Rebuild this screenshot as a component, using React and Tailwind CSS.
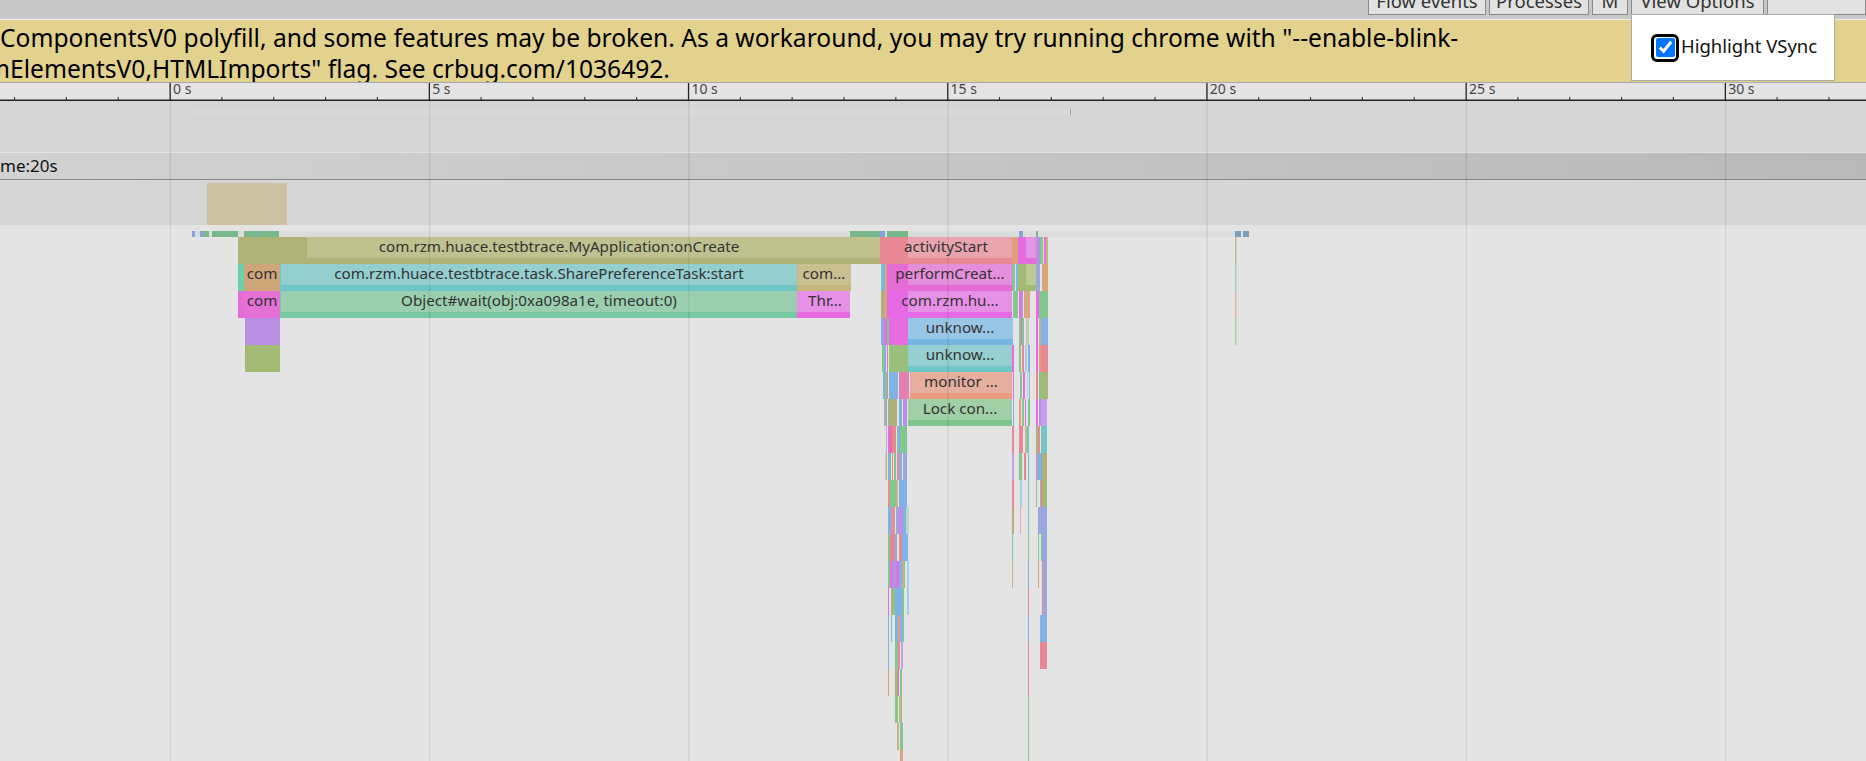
const G = "#82c88e", B = "#80b2e5", P = "#e98895", M = "#e56de0", U = "#b88fe2", O = "#aeb27a", T = "#c9b27e", S = "#e0a07f", C = "#70c7c7", A = "#a2ba74", V = "#9aa8e0", LB = "#a9cdef", LP = "#e9a9b2", D = "#c5a0ea";

const FONT = "font-['Noto_Sans',sans-serif]";
const X0 = 170, STEP = 259.2;
const majors = [0, 1, 2, 3, 4, 5, 6, 7].map((k) => X0 + k * STEP);
const minors = [];
for (let k = -1; k < 8; k++) for (let j = 1; j < 5; j++) minors.push(X0 + (k + j / 5) * STEP);
const RULER = [[0, "0 s"], [1, "5 s"], [2, "10 s"], [3, "15 s"], [4, "20 s"], [5, "25 s"], [6, "30 s"]];

const named = [
  { r: 1, a: 238, b: 880, base: "#b1b376", la: 307, lb: 880, light: "#bfc28f", t: "com.rzm.huace.testbtrace.MyApplication:onCreate", c: 559 },
  { r: 1, a: 880, b: 1012, base: "#e98895", la: 908, lb: 1012, light: "#e9a4ae", t: "activityStart", c: 946 },
  { r: 2, a: 244, b: 280, base: "#cfa57a", la: 244, lb: 280, light: "#cfa57a", t: "com", c: 262 },
  { r: 2, a: 280, b: 797, base: "#6fc5c7", la: 281, lb: 797, light: "#94cfd0", t: "com.rzm.huace.testbtrace.task.SharePreferenceTask:start", c: 539 },
  { r: 2, a: 797, b: 851, base: "#c5b67b", la: 798, lb: 851, light: "#c9bf90", t: "com...", c: 824 },
  { r: 2, a: 887, b: 1012, base: "#e56cd4", la: 908, lb: 1012, light: "#e58fdc", t: "performCreat...", c: 950 },
  { r: 3, a: 244, b: 280, base: "#e571d6", la: 244, lb: 280, light: "#e571d6", t: "com", c: 262 },
  { r: 3, a: 280, b: 797, base: "#76c9a0", la: 281, lb: 797, light: "#9ad0b0", t: "Object#wait(obj:0xa098a1e, timeout:0)", c: 539 },
  { r: 3, a: 797, b: 850, base: "#e66ae6", la: 797, lb: 850, light: "#e691e6", t: "Thr...", c: 825 },
  { r: 3, a: 887, b: 1012, base: "#e66ae6", la: 908, lb: 1012, light: "#e691e6", t: "com.rzm.hu...", c: 950 },
  { r: 4, a: 908, b: 1013, base: "#76b6e6", la: 908, lb: 1013, light: "#98c6e6", t: "unknow...", c: 960 },
  { r: 5, a: 908, b: 1012, base: "#70c7c7", la: 908, lb: 1012, light: "#96cfcf", t: "unknow...", c: 960 },
  { r: 6, a: 910, b: 1012, base: "#e79b7f", la: 910, lb: 1012, light: "#e5ae9f", t: "monitor ...", c: 961 },
  { r: 7, a: 908, b: 1012, base: "#7fc68e", la: 908, lb: 1012, light: "#a2d0a6", t: "Lock con...", c: 960 },
];

// [row, x1, x2, colour]
const s = [
  [1, 1012, 1018, S], [1, 1018, 1036, M], [1, 1026, 1036, "#e595e5", 21], [1, 1036, 1040, U], [1, 1040, 1043, G], [1, 1044, 1046, M], [1, 1046, 1048, T],
  [2, 238, 244, "#6fcfa9"], [2, 881, 883, C], [2, 883, 885, B], [2, 885, 887, S], [2, 1012, 1015, G], [2, 1016, 1018, B], [2, 1018, 1036, A], [2, 1026, 1036, "#b9cc96", 21], [2, 1036, 1040, V], [2, 1042, 1048, "#d6a57a"],
  [3, 238, 244, "#e56cd4"], [3, 881, 884, O], [3, 884, 887, S], [3, 1013, 1018, G], [3, 1019, 1021, M], [3, 1021, 1023, U], [3, 1024, 1030, "#d8a881"], [3, 1036, 1039, M], [3, 1039, 1048, G],
  [4, 245, 280, U], [4, 881, 883, B], [4, 883, 885, U], [4, 885, 887, M], [4, 887, 889, G], [4, 889, 908, M], [4, 1019, 1021, G], [4, 1021, 1022, M], [4, 1022, 1024, G], [4, 1026, 1029, "#c8c4c0"], [4, 1036, 1038, M], [4, 1039, 1041, T], [4, 1041, 1048, B],
  [5, 245, 280, A], [5, 882, 884, G], [5, 884, 886, B], [5, 887, 888, M], [5, 889, 908, "#98c07c"], [5, 1012, 1014, M], [5, 1019, 1021, G], [5, 1022, 1024, P], [5, 1025, 1027, LB], [5, 1028, 1030, B], [5, 1036, 1038, M], [5, 1039, 1041, S], [5, 1041, 1048, P],
  [6, 883, 885, B], [6, 885, 887, G], [6, 887, 888, P], [6, 889, 898, B], [6, 899, 909, "#e47fb2"], [6, 1013, 1014, M], [6, 1020, 1022, G], [6, 1023, 1025, M], [6, 1027, 1028, LB], [6, 1029, 1030, C], [6, 1036, 1038, P], [6, 1039, 1041, G], [6, 1041, 1048, A],
  [7, 884, 885, S], [7, 885, 887, B], [7, 888, 897, O], [7, 899, 902, B], [7, 903, 907, U], [7, 1013, 1014, B], [7, 1019, 1021, S], [7, 1022, 1024, G], [7, 1025, 1026, M], [7, 1028, 1030, G], [7, 1036, 1038, M], [7, 1039, 1041, U], [7, 1041, 1047, D],
  [8, 886, 887, D], [8, 888, 890, M], [8, 890, 892, "#e56fa0"], [8, 892, 896, P], [8, 897, 898, G], [8, 898, 900, B], [8, 900, 907, G], [8, 1012, 1014, P], [8, 1019, 1023, P], [8, 1025, 1027, "#c0b5a5"], [8, 1027, 1028, G], [8, 1028, 1029, C], [8, 1036, 1038, O], [8, 1038, 1040, P], [8, 1041, 1047, C],
  [9, 885.5, 887, T], [9, 888, 890, B], [9, 890, 891, G], [9, 892, 893, P], [9, 894, 896, G], [9, 897, 899, P], [9, 899, 902, V], [9, 903, 907, V], [9, 1012, 1014, D], [9, 1019, 1022, G], [9, 1024, 1026, P], [9, 1028, 1029, C], [9, 1036, 1037, P], [9, 1037, 1042, B], [9, 1042, 1047, O],
  [10, 888, 890, P], [10, 890, 896, G], [10, 896, 898, T], [10, 899, 903, B], [10, 903, 907, B], [10, 1012, 1014, P], [10, 1020, 1022, LB], [10, 1028, 1029, C], [10, 1036, 1037, G], [10, 1040, 1041, T], [10, 1041, 1042, M], [10, 1042, 1047, A],
  [11, 888, 891, B], [11, 891, 895, "#e0909f"], [11, 896, 898, V], [11, 898, 903, U], [11, 903, 906, B], [11, 906, 909, "#b5dcc0"], [11, 1012, 1014, "#b9ae7a"], [11, 1020, 1021, LP], [11, 1028, 1029, C], [11, 1038, 1040, V], [11, 1040, 1047, V],
  [12, 888, 890, G], [12, 890, 895, P], [12, 895, 897, B], [12, 899, 902, P], [12, 902, 908, B], [12, 1012, 1013, "#6fcfa9"], [12, 1028, 1029, G], [12, 1038, 1039, G], [12, 1041, 1042, G], [12, 1042, 1047, V],
  [13, 888, 890, G], [13, 890, 892, M], [13, 892, 897, U], [13, 897, 899, M], [13, 899, 902, B], [13, 902, 904, T], [13, 904, 905, G], [13, 907, 909, LB], [13, 1012, 1013, T], [13, 1028, 1029, B], [13, 1038, 1039, S], [13, 1042, 1043, P], [13, 1043, 1047, V],
  [14, 888, 889, M], [14, 891, 893, O], [14, 893, 895, G], [14, 895, 899, B], [14, 899, 902, B], [14, 902, 904, G], [14, 907, 909, LB], [14, 1028, 1029, P], [14, 1042, 1043, P], [14, 1043, 1047, V],
  [15, 888, 889, B], [15, 891, 892, G], [15, 895, 898, B], [15, 898, 900, S], [15, 900, 903, B], [15, 903, 904, G], [15, 1028, 1029, B], [15, 1040, 1047, B],
  [16, 888, 889, B], [16, 895, 898, G], [16, 898, 900, P], [16, 901, 903, D], [16, 1028, 1029, P], [16, 1040, 1047, P],
  [17, 888, 889, S], [17, 895, 898, O], [17, 898, 899, M], [17, 900, 902, G], [17, 1028, 1029, P],
  [18, 895, 898, G], [18, 899, 901, T], [18, 901, 902, G], [18, 1028, 1029, G],
  [19, 897, 899, T], [19, 900, 903, G], [19, 1028, 1029, G],
  [20, 900, 903, S], [20, 1028, 1029, G],
  // thin trace near 20 s
  [1, 1235, 1236.5, "#c0b58f"], [2, 1235, 1236.5, "#98cfcf"], [3, 1235, 1236.5, "#e2b0a5"], [4, 1235, 1236.5, "#a5d2a8"],
];

const top0 = [
  [192, 195, "#8aa0d8"], [200, 203, "#8aa0d8"], [203, 209, "#78b98c"], [212, 238, "#78b98c"], [244, 279, "#78b98c"], [257, 258, "#8aa0d8"],
  [850, 880, "#78b98c"], [880, 885, "#8aa0d8"], [887, 908, "#78b98c"], [1019, 1023, "#8aa0d8"], [1036, 1038, "#78b98c"], [1235, 1241, "#7f9fb8"], [1243, 1249, "#7f9fb8"],
];

const rowY = (r) => 12 + (r - 1) * 27; // inside the flame area, which starts at y=225

function Flame() {
  return (
    <svg className="absolute inset-0 w-full h-full" viewBox="0 0 1866 536">
      <rect x="195" y="6" width="1054" height="6" fill="#dcdcdc" />
      {top0.map(([a, b, c], i) => (
        <rect key={i} x={a} y="6" width={b - a} height="6" fill={c} />
      ))}
      {named.map((n, i) => (
        <g key={i}>
          <rect x={n.a} y={rowY(n.r)} width={n.b - n.a} height="27" fill={n.base} />
          <rect x={n.la} y={rowY(n.r)} width={n.lb - n.la} height="21" fill={n.light} />
        </g>
      ))}
      {s.map(([r, a, b, c, h], i) => (
        <rect key={i} x={a} y={rowY(r)} width={b - a} height={h || 27} fill={c} />
      ))}
      {named.map((n, i) => (
        <text key={i} x={n.c} y={rowY(n.r) + 15} textAnchor="middle" fontSize="15.2" fill="#333333">
          {n.t}
        </text>
      ))}
    </svg>
  );
}

function TopButton({ children, className = "" }) {
  return (
    <div className={`h-[26px] border border-[#8a8a8a] bg-[#e2e2e2] text-[18.5px] leading-[22px] text-[#333] text-center overflow-hidden whitespace-nowrap ${className}`}>
      {children}
    </div>
  );
}

export default function App() {
  return (
    <div className={`relative w-[1866px] h-[761px] overflow-hidden flex flex-col bg-[#e4e4e4] text-[#111] ${FONT}`}>
      {/* toolbar */}
      <div className="h-[19px] bg-[#c8c8c8] flex items-end justify-end overflow-hidden shrink-0 pb-[4px]">
        <div className="flex gap-[3px] shrink-0">
          <TopButton className="w-[118px]">Flow events</TopButton>
          <TopButton className="w-[100px]">Processes</TopButton>
          <TopButton className="w-[36px]">M</TopButton>
          <TopButton className="w-[133px]">View Options</TopButton>
          <TopButton className="w-[99px]" />
        </div>
      </div>

      {/* warning banner */}
      <div className="h-[64px] shrink-0 border-t border-[#eeeeee] border-b border-b-[#a8a8a8] bg-[#e2d28e] text-[24.6px] leading-[31px] text-black whitespace-nowrap overflow-hidden pt-[2px]">
        <div>ComponentsV0 polyfill, and some features may be broken. As a workaround, you may try running chrome with "--enable-blink-</div>
        <div className="-ml-[13px]">mElementsV0,HTMLImports" flag. See crbug.com/1036492.</div>
      </div>

      {/* ruler */}
      <div className="h-[18px] shrink-0 bg-[#e4e4e4]">
        <svg className="block w-full h-full" viewBox="0 0 1866 18">
          <rect x="0" y="16.5" width="1866" height="1.5" fill="#222222" />
          {majors.map((x) => (
            <rect key={x} x={x - 0.5} y="0" width="1.3" height="18" fill="#222222" />
          ))}
          {minors.map((x) => (
            <rect key={x} x={x - 0.5} y="14" width="1.1" height="3" fill="#333333" />
          ))}
          {RULER.map(([k, t]) => (
            <text key={t} x={X0 + k * STEP + 3} y="10.5" fontSize="14" fill="#444444">
              {t}
            </text>
          ))}
        </svg>
      </div>

      {/* track */}
      <div className="h-[52px] shrink-0 bg-[#d6d6d6] border-b border-[#e2e2e2]">
        <svg className="block w-full h-full" viewBox="0 0 1866 51">
          <rect x="189" y="8" width="881" height="6" fill="#d9d9d9" />
          {[287, 720, 1020].map((x) => (
            <rect key={x} x={x} y="8" width="1" height="6" fill="#d0d0d0" />
          ))}
          <rect x="1070" y="8" width="1" height="6" fill="#78b98c" />
        </svg>
      </div>

      {/* process header */}
      <div className="h-[27px] shrink-0 bg-gradient-to-r from-[#d2d2d2] to-[#b9b9b9] border-b border-[#888888] text-[17px] leading-[26px] text-[#111]">
        me:20s
      </div>

      {/* counter track */}
      <div className="h-[45px] shrink-0 bg-[#d6d6d6] flex items-end">
        <div className="ml-[207px] w-[80px] h-[42px] bg-[#ccc2a3]" />
      </div>

      {/* flame chart */}
      <div className="relative flex-1">
        <Flame />
      </div>

      {/* grid lines */}
      <svg className="absolute inset-0 w-full h-full pointer-events-none" viewBox="0 0 1866 761">
        {majors.map((x) => (
          <rect key={x} x={x - 0.5} y="101" width="1.6" height="660" fill="#000000" fillOpacity="0.07" />
        ))}
      </svg>

      {/* view options menu */}
      <div className="absolute left-[1631px] top-[14px] w-[204px] h-[67px] bg-white border border-[#aaaaaa] flex items-center pl-[19px] text-[18.5px] text-[#111]">
        <div className="w-[28px] h-[28px] shrink-0 border-[3px] border-black rounded-[6px] flex items-center justify-center">
          <input
            type="checkbox"
            checked
            readOnly
            className="w-[19px] h-[19px] m-0 accent-[#0075ff]"
          />
        </div>
        <span className="ml-[2px] -mt-[4px] whitespace-nowrap">Highlight VSync</span>
      </div>
    </div>
  );
}
